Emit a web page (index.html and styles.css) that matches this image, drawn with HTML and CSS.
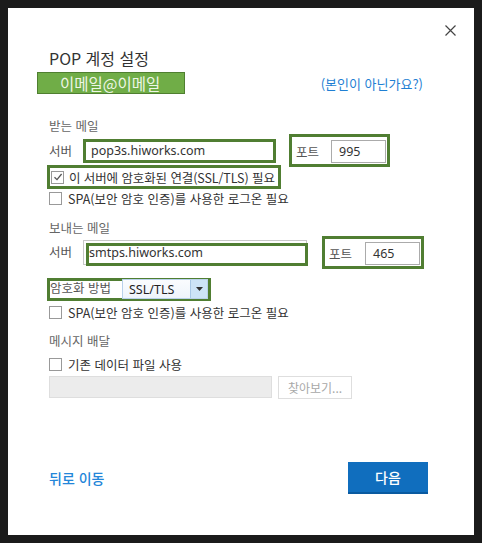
FILE: index.html
```html
<!DOCTYPE html>
<html lang="ko">
<head>
<meta charset="utf-8">
<title>POP 계정 설정</title>
<link rel="stylesheet" href="styles.css">
</head>
<body>
<div class="dialog">
  <button class="close" aria-label="닫기">
    <svg width="11" height="11" viewBox="0 0 11 11"><path d="M0.5 0.5 L10.5 10.5 M10.5 0.5 L0.5 10.5" stroke="#444" stroke-width="1.2" fill="none"/></svg>
  </button>
  <h1 class="title">POP 계정 설정</h1>
  <div class="account-row">
    <span class="email-badge">이메일@이메일</span>
    <a class="link small-link" href="#">(본인이 아닌가요?)</a>
  </div>

  <section class="group group-in">
    <div class="group-label">받는 메일</div>
    <div class="server-row">
      <span class="field-label">서버</span>
      <div class="textbox hl server-in">pop3s.hiworks.com</div>
      <div class="port-box hl port-in">
        <span class="field-label">포트</span>
        <div class="textbox port-input">995</div>
      </div>
    </div>
    <div class="check-row hl ssl-row">
      <span class="checkbox checked"><svg width="10" height="10" viewBox="0 0 10 10"><path d="M1.5 5.2 L4 7.6 L8.6 2" stroke="#555" stroke-width="1.3" fill="none"/></svg></span>
      <span>이 서버에 암호화된 연결(SSL/TLS) 필요</span>
    </div>
    <div class="check-row">
      <span class="checkbox"></span>
      <span>SPA(보안 암호 인증)를 사용한 로그온 필요</span>
    </div>
  </section>

  <section class="group group-out">
    <div class="group-label">보내는 메일</div>
    <div class="server-row server-row-out">
      <span class="field-label">서버</span>
      <div class="textbox server-out">smtps.hiworks.com<span class="hl-shift"></span></div>
      <div class="port-box hl port-out">
        <span class="field-label">포트</span>
        <div class="textbox port-input">465</div>
      </div>
    </div>
    <div class="enc-row hl">
      <span class="field-label enc-label">암호화 방법</span>
      <div class="select">
        <span class="select-value">SSL/TLS</span>
        <span class="select-btn"><svg width="7" height="4" viewBox="0 0 7 4"><path d="M0 0 H7 L3.5 4 Z" fill="#333"/></svg></span>
      </div>
    </div>
    <div class="check-row spa-out">
      <span class="checkbox"></span>
      <span>SPA(보안 암호 인증)를 사용한 로그온 필요</span>
    </div>
  </section>

  <section class="group group-deliver">
    <div class="group-label">메시지 배달</div>
    <div class="check-row">
      <span class="checkbox"></span>
      <span>기존 데이터 파일 사용</span>
    </div>
    <div class="file-row">
      <div class="file-input"></div>
      <button class="browse">찾아보기...</button>
    </div>
  </section>

  <footer class="footer">
    <a class="link back-link" href="#">뒤로 이동</a>
    <button class="primary">다음</button>
  </footer>
</div>
</body>
</html>
```

FILE: styles.css
```css
html, body {
  margin: 0;
  padding: 0;
  background: #1b1b1b;
}

body {
  font-family: "Noto Sans", "Noto Sans CJK KR", sans-serif;
  font-size: 12px;
  color: #333;
}

.dialog {
  position: relative;
  box-sizing: border-box;
  margin: 8px 0 0 8px;
  width: 466px;
  height: 527px;
  background: #fff;
  padding: 40px 46px 41px 41px;
  display: flex;
  flex-direction: column;
}

.close {
  position: absolute;
  top: 9px;
  right: 11px;
  width: 26px;
  height: 26px;
  border: 0;
  background: transparent;
  padding: 0;
  display: flex;
  align-items: center;
  justify-content: center;
}

.title {
  margin: 0;
  font-size: 16px;
  line-height: 20px;
  font-weight: normal;
  color: #333;
  font-family: "Noto Sans CJK KR", sans-serif;
}

.account-row {
  margin-top: 4px;
  height: 22px;
  display: flex;
  align-items: center;
  justify-content: space-between;
}

.email-badge {
  box-sizing: border-box;
  margin-left: -12px;
  width: 148px;
  height: 22px;
  background: #70ad47;
  border: 1px solid #4f7f30;
  color: #eef6e6;
  font-family: "Noto Sans CJK KR", sans-serif;
  font-size: 15.5px;
  line-height: 20px;
  padding-left: 22px;
}

.link {
  color: #1f7fd3;
  text-decoration: none;
}

.small-link {
  font-size: 13px;
  margin-right: 5px;
  font-family: "Noto Sans CJK KR", sans-serif;
}

.group {
  display: flex;
  flex-direction: column;
}

.group-in { margin-top: 24px; }
.group-out { margin-top: 13px; }
.group-deliver { margin-top: 12px; }

.group-label {
  color: #666;
  line-height: 16px;
  font-size: 12.5px;
  font-family: "Noto Sans CJK KR", sans-serif;
}

.field-label {
  color: #555;
  font-family: "Noto Sans CJK KR", sans-serif;
  font-size: 12.5px;
  line-height: 16px;
}

.server-row {
  display: flex;
  align-items: center;
  height: 33px;
}

.server-row > .field-label {
  width: 34px;
  align-self: flex-start;
  margin-top: 9px;
}

.textbox {
  box-sizing: border-box;
  border: 1px solid #ababab;
  height: 23px;
  line-height: 21px;
  padding-left: 7px;
  font-size: 12.5px;
  color: #333;
  background: #fff;
}

.hl {
  border: 3px solid #507e32;
}

.server-in {
  width: 193px;
  height: 24px;
  line-height: 18px;
  padding-left: 5px;
}

.port-box {
  box-sizing: border-box;
  display: flex;
  align-items: flex-start;
  height: 33px;
  padding: 2px 0 0 4px;
  gap: 0;
}

.port-box .field-label {
  margin-top: 5px;
  width: 35px;
}

.port-input {
  width: 55px;
  height: 23px;
  margin-top: 1px;
}

.port-in {
  margin-left: 13px;
  width: 101px;
}

.server-row-out {
  height: 32px;
}

.server-out {
  position: relative;
  width: 224px;
  height: 25px;
  margin-top: 4px;
  align-self: flex-start;
  border-color: #c8c8c8;
  padding-left: 5px;
  padding-top: 2px;
  line-height: 20px;
}

.hl-shift {
  position: absolute;
  left: 2px;
  top: 2px;
  right: -2px;
  bottom: -2px;
  border: 3px solid #507e32;
}

.server-row-out > .field-label {
  margin-top: 8px;
}

.port-out {
  margin-left: 15px;
  width: 102px;
  padding-left: 4px;
}

.port-out .field-label {
  width: 36px;
}

.check-row {
  display: flex;
  align-items: center;
  height: 18px;
  font-family: "Noto Sans CJK KR", sans-serif;
  font-size: 12.5px;
  color: #333;
  white-space: nowrap;
}

.checkbox {
  box-sizing: border-box;
  flex: none;
  width: 13px;
  height: 13px;
  border: 1px solid #999;
  background: #fff;
  margin-right: 6px;
  display: flex;
  align-items: center;
  justify-content: center;
}

.ssl-row {
  box-sizing: border-box;
  margin-top: -2px;
  margin-left: -2px;
  width: 234px;
  height: 24px;
  padding-left: 1px;
  letter-spacing: -0.1px;
}

.ssl-row .checkbox {
  margin-right: 5px;
}

.enc-row {
  box-sizing: border-box;
  margin-top: 10px;
  margin-left: -2px;
  width: 164px;
  height: 23px;
  display: flex;
  align-items: center;
}

.enc-label {
  width: 72px;
  margin-top: -3px;
}

.select {
  box-sizing: border-box;
  width: 86px;
  height: 20px;
  border: 1px solid #b9d1ea;
  background: linear-gradient(#fafcfe, #eef4fb);
  display: flex;
  align-items: center;
  margin-top: -1px;
}

.select-value {
  flex: 1;
  padding-left: 6px;
  font-size: 12.5px;
  color: #222;
}

.select-btn {
  width: 16px;
  height: 18px;
  background: #cde4f7;
  border-left: 1px solid #a9c8e6;
  display: flex;
  align-items: center;
  justify-content: center;
}

.spa-out {
  margin-top: 2px;
}

.group-deliver .check-row {
  margin-top: 6px;
}

.file-row {
  display: flex;
  align-items: flex-start;
  margin-top: 3px;
  gap: 6px;
}

.file-input {
  box-sizing: border-box;
  width: 223px;
  height: 22px;
  background: #ececec;
  border: 1px solid #dedede;
}

.browse {
  box-sizing: border-box;
  width: 74px;
  height: 23px;
  background: #fff;
  border: 1px solid #dedede;
  color: #a8a8a8;
  font-family: "Noto Sans CJK KR", sans-serif;
  font-size: 12px;
  padding: 0;
}

.footer {
  margin-top: auto;
  display: flex;
  align-items: center;
  justify-content: space-between;
}

.back-link {
  font-family: "Noto Sans CJK KR", sans-serif;
  font-size: 14px;
  font-weight: 500;
  color: #2386d9;
}

.primary {
  box-sizing: border-box;
  width: 80px;
  height: 32px;
  background: #106ebe;
  border: 0;
  border-bottom: 2px solid #0a5aa0;
  color: #fff;
  font-family: "Noto Sans CJK KR", sans-serif;
  font-size: 14px;
  font-weight: 500;
  padding: 0;
}
```
